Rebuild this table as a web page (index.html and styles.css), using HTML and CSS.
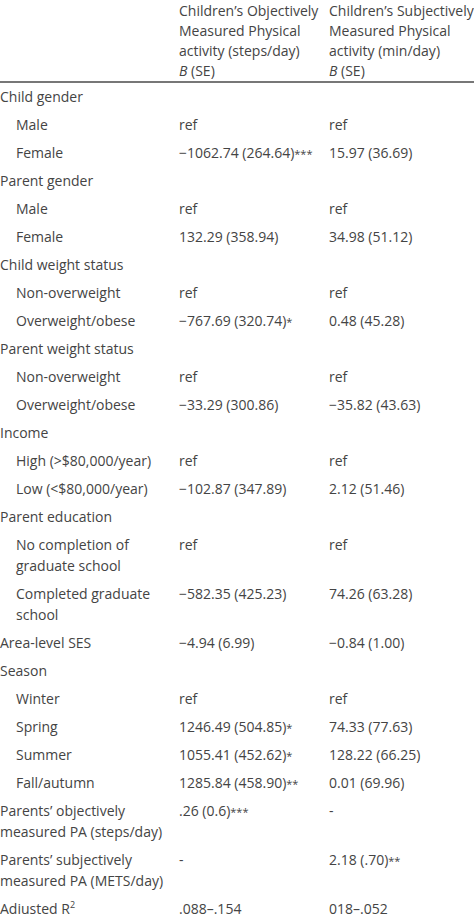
FILE: index.html
```html
<!DOCTYPE html>
<html>
<head>
<meta charset="utf-8">
<link rel="stylesheet" href="styles.css">
</head>
<body>
<table class="tbl">
  <colgroup>
    <col class="c1"><col class="c2"><col class="c3">
  </colgroup>
  <thead>
    <tr class="hrow top">
      <th></th>
      <th>Children’s Objectively Measured Physical activity (steps/day)</th>
      <th>Children’s Subjectively Measured Physical activity (min/day)</th>
    </tr>
    <tr class="hrow sub">
      <th></th>
      <th><i>B</i> (SE)</th>
      <th><i>B</i> (SE)</th>
    </tr>
  </thead>
  <tbody>
    <tr><td>Child gender</td><td></td><td></td></tr>
    <tr><td class="ind">Male</td><td>ref</td><td>ref</td></tr>
    <tr><td class="ind">Female</td><td>−1062.74 (264.64)<span class="ast">***</span></td><td>15.97 (36.69)</td></tr>
    <tr><td>Parent gender</td><td></td><td></td></tr>
    <tr><td class="ind">Male</td><td>ref</td><td>ref</td></tr>
    <tr><td class="ind">Female</td><td>132.29 (358.94)</td><td>34.98 (51.12)</td></tr>
    <tr><td>Child weight status</td><td></td><td></td></tr>
    <tr><td class="ind">Non-overweight</td><td>ref</td><td>ref</td></tr>
    <tr><td class="ind">Overweight/obese</td><td>−767.69 (320.74)<span class="ast">*</span></td><td>0.48 (45.28)</td></tr>
    <tr><td>Parent weight status</td><td></td><td></td></tr>
    <tr><td class="ind">Non-overweight</td><td>ref</td><td>ref</td></tr>
    <tr><td class="ind">Overweight/obese</td><td>−33.29 (300.86)</td><td>−35.82 (43.63)</td></tr>
    <tr><td>Income</td><td></td><td></td></tr>
    <tr><td class="ind">High (&gt;$80,000/year)</td><td>ref</td><td>ref</td></tr>
    <tr><td class="ind">Low (&lt;$80,000/year)</td><td>−102.87 (347.89)</td><td>2.12 (51.46)</td></tr>
    <tr><td>Parent education</td><td></td><td></td></tr>
    <tr><td class="ind">No completion of graduate school</td><td>ref</td><td>ref</td></tr>
    <tr><td class="ind">Completed graduate school</td><td>−582.35 (425.23)</td><td>74.26 (63.28)</td></tr>
    <tr><td>Area-level SES</td><td>−4.94 (6.99)</td><td>−0.84 (1.00)</td></tr>
    <tr><td>Season</td><td></td><td></td></tr>
    <tr><td class="ind">Winter</td><td>ref</td><td>ref</td></tr>
    <tr><td class="ind">Spring</td><td>1246.49 (504.85)<span class="ast">*</span></td><td>74.33 (77.63)</td></tr>
    <tr><td class="ind">Summer</td><td>1055.41 (452.62)<span class="ast">*</span></td><td>128.22 (66.25)</td></tr>
    <tr><td class="ind">Fall/autumn</td><td>1285.84 (458.90)<span class="ast">**</span></td><td>0.01 (69.96)</td></tr>
    <tr><td>Parents’ objectively measured PA (steps/day)</td><td>.26 (0.6)<span class="ast">***</span></td><td>-</td></tr>
    <tr><td>Parents’ subjectively measured PA (METS/day)</td><td>-</td><td>2.18 (.70)<span class="ast">**</span></td></tr>
    <tr><td>Adjusted R<sup>2</sup></td><td>.088–.154</td><td>018–.052</td></tr>
  </tbody>
</table>
</body>
</html>
```
FILE: styles.css
```css
html, body {
  margin: 0;
  padding: 0;
  background: #fff;
  overflow: hidden;
}
body {
  width: 474px;
  height: 914px;
  font-family: "Open Sans", "Noto Sans", sans-serif;
  font-size: 14px;
  color: #444;
}
.tbl {
  border-collapse: collapse;
  table-layout: fixed;
  width: 500px;
}
.c1 { width: 179px; }
.c2 { width: 150px; }
.c3 { width: 171px; }
.tbl th {
  font-weight: normal;
  text-align: left;
  vertical-align: top;
  padding: 0 4px 0 0;
  line-height: 20px;
}
.tbl .top th {
  padding-top: 1px;
}
.tbl .sub th {
  padding-bottom: 0;
  border-bottom: 2px solid #777;
}
.tbl td {
  vertical-align: top;
  padding: 3px 6px 4px 0;
  line-height: 21px;
}
.tbl td.ind {
  padding-left: 16px;
}
.ast {
  font-size: 11px;
  line-height: 0;
}
sup {
  font-size: 9px;
  line-height: 0;
  vertical-align: 6px;
}
```
